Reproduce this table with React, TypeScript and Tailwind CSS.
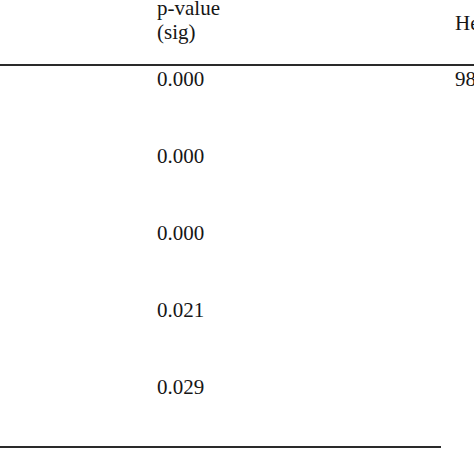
const rows = [
  { p: "0.000", extra: "98" },
  { p: "0.000" },
  { p: "0.000" },
  { p: "0.021" },
  { p: "0.029" },
];

export default function App() {
  return (
    <div
      className="h-[474px] w-[474px] overflow-hidden bg-white text-[21px] leading-[24px] text-[#161616]"
      style={{ fontFamily: '"Liberation Serif", "Times New Roman", serif' }}
    >
      {/* header */}
      <div className="flex h-[64px] whitespace-nowrap">
        <div className="w-[157px] shrink-0" />
        <div className="-mt-[4px] w-[298px] shrink-0">
          <div>p-value</div>
          <div>(sig)</div>
        </div>
        <div className="pt-[11px]">Hemm</div>
      </div>
      <div className="h-[2px] w-[474px] bg-[#2a2a2a]" />

      {/* body */}
      <div className="flex flex-col gap-[53px] pt-[1px] whitespace-nowrap">
        {rows.map((r, i) => (
          <div key={i} className="flex">
            <div className="w-[157px] shrink-0" />
            <div className="w-[298px] shrink-0">{r.p}</div>
            <div>{r.extra ?? ""}</div>
          </div>
        ))}
      </div>
      <div className="mt-[47px] h-[2px] w-[441px] bg-[#2a2a2a]" />
    </div>
  );
}
